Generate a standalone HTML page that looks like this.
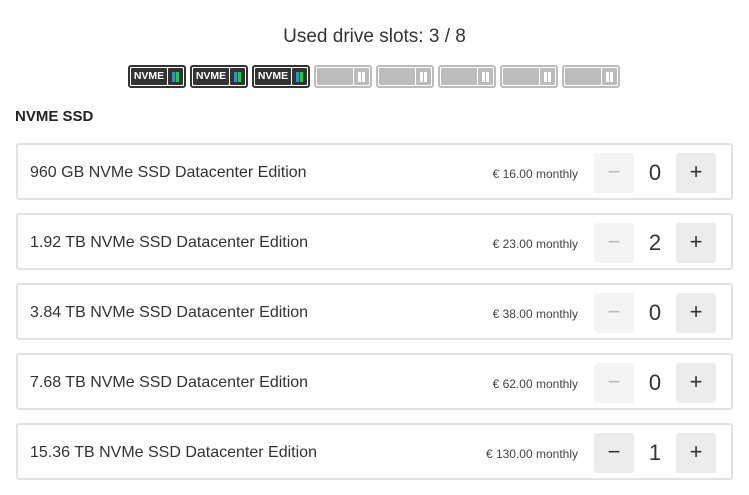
<!DOCTYPE html>
<html><head><style>
*{box-sizing:border-box;margin:0;padding:0}
body{width:749px;height:495px;background:#fff;font-family:"Liberation Sans",sans-serif;color:#222;position:relative;overflow:hidden}
.title{position:absolute;top:26px;left:0;width:749px;text-align:center;font-size:19px;color:#333}
.slot{position:absolute;top:65px;width:58px;height:23px;border:2px solid #333;border-radius:3px;padding:1px;display:flex;gap:1px}
.slot .l{flex:1;background:#333;color:#fff;font-size:10.5px;font-weight:bold;line-height:17px;text-align:center;border-radius:1px}
.slot .r{width:15px;background:#333;display:flex;align-items:center;justify-content:center;gap:1px;border-radius:1px}
.slot .r i{width:3px;height:10px;display:block}
.slot.e{border-color:#bbb}
.slot.e .l,.slot.e .r{background:#bbb}
.slot.e .r i{background:#fff}
h2{position:absolute;top:108px;left:15px;font-size:15px;font-weight:bold;color:#222}
.row{position:absolute;left:16px;width:717px;height:57px;border:2px solid #e2e2e2;border-radius:3px}
.name{position:absolute;left:12px;top:19px;font-size:16px;color:#333}
.price{position:absolute;right:153px;top:22px;font-size:12px;color:#444}
.btn{position:absolute;top:8px;width:40px;height:40px;background:#f4f4f4;border-radius:3px;text-align:center;line-height:38px;font-size:22px;color:#bbb}
.minus{left:576px}.plus{left:658px;background:#ececec;color:#333}
.minus.on{background:#ececec;color:#333}
.num{position:absolute;left:618px;width:38px;top:15px;text-align:center;font-size:22px;color:#333}
</style></head><body>
<div class="title">Used drive slots: 3 / 8</div>
<div class="slot" style="left:128px"><div class="l">NVME</div><div class="r"><i style="background:#29c"></i><i style="background:#2c3"></i></div></div>
<div class="slot" style="left:190px"><div class="l">NVME</div><div class="r"><i style="background:#29c"></i><i style="background:#2c3"></i></div></div>
<div class="slot" style="left:252px"><div class="l">NVME</div><div class="r"><i style="background:#29c"></i><i style="background:#2c3"></i></div></div>
<div class="slot e" style="left:314px"><div class="l"></div><div class="r"><i></i><i></i></div></div>
<div class="slot e" style="left:376px"><div class="l"></div><div class="r"><i></i><i></i></div></div>
<div class="slot e" style="left:438px"><div class="l"></div><div class="r"><i></i><i></i></div></div>
<div class="slot e" style="left:500px"><div class="l"></div><div class="r"><i></i><i></i></div></div>
<div class="slot e" style="left:562px"><div class="l"></div><div class="r"><i></i><i></i></div></div>
<h2>NVME SSD</h2>
<div class="row" style="top:143px"><div class="name">960 GB NVMe SSD Datacenter Edition</div><div class="price">€ 16.00 monthly</div><div class="btn minus">−</div><div class="num">0</div><div class="btn plus">+</div></div>
<div class="row" style="top:213px"><div class="name">1.92 TB NVMe SSD Datacenter Edition</div><div class="price">€ 23.00 monthly</div><div class="btn minus">−</div><div class="num">2</div><div class="btn plus">+</div></div>
<div class="row" style="top:283px"><div class="name">3.84 TB NVMe SSD Datacenter Edition</div><div class="price">€ 38.00 monthly</div><div class="btn minus">−</div><div class="num">0</div><div class="btn plus">+</div></div>
<div class="row" style="top:353px"><div class="name">7.68 TB NVMe SSD Datacenter Edition</div><div class="price">€ 62.00 monthly</div><div class="btn minus">−</div><div class="num">0</div><div class="btn plus">+</div></div>
<div class="row" style="top:423px"><div class="name">15.36 TB NVMe SSD Datacenter Edition</div><div class="price">€ 130.00 monthly</div><div class="btn minus on">−</div><div class="num">1</div><div class="btn plus">+</div></div>
</body></html>
